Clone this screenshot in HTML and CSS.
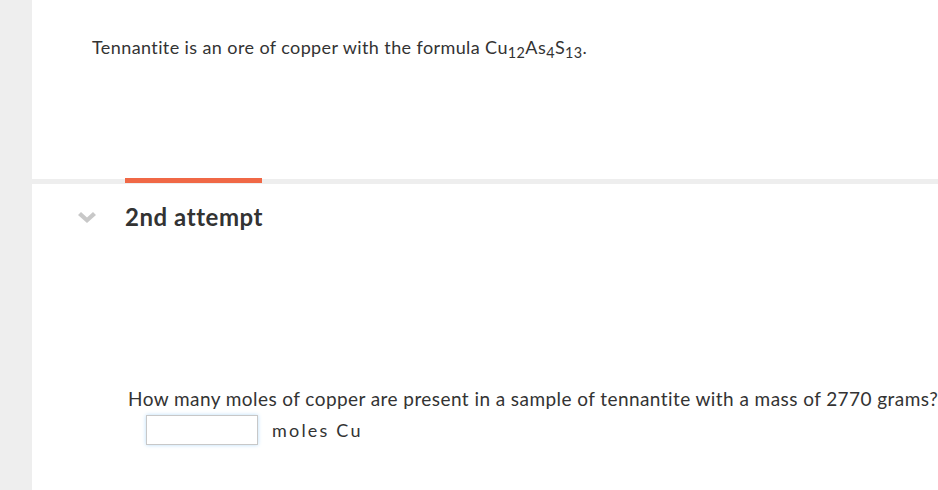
FILE: index.html
```html
<!DOCTYPE html>
<html lang="en">

<head>
    <meta charset="UTF-8">
    <meta name="viewport" content="width=device-width, initial-scale=1.0">
    <title>Tennantite</title>
    <link rel="stylesheet" href="styles.css">
</head>

<body>
    <div class="page">
        <div class="sidebar"></div>
        <div class="content">
            <!-- Problem intro -->
            <div class="intro">
                <p>Tennantite is an ore of copper with the formula Cu<sub>12</sub>As<sub>4</sub>S<sub>13</sub>.</p>
            </div>

            <!-- Attempt -->
            <div class="attempt">
                <div class="attempt-tab"></div>
                <div class="attempt-header">
                    <svg class="chevron" width="18" height="11" viewBox="0 0 18 11">
                        <polygon points="0,3 3,0 9,5.5 15,0 18,3 9,11" fill="#c8c8c8" />
                    </svg>
                    <h2>2nd attempt</h2>
                </div>
                <div class="question">
                    <p>How many moles of copper are present in a sample of tennantite with a mass of 2770 grams?</p>
                    <div class="answer">
                        <input type="text" class="answer-input">
                        <span class="unit">moles Cu</span>
                    </div>
                </div>
            </div>
        </div>
    </div>
</body>
</html>
```

FILE: styles.css
```css
body {
    margin: 0;
    font-family: Lato, "Open Sans", sans-serif;
    color: #333;
    background-color: #fff;
}

.page {
    display: flex;
    height: 490px;
    overflow: hidden;
}

.sidebar {
    width: 32px;
    flex-shrink: 0;
    background-color: #eee;
}

.content {
    flex: 1;
    min-width: 0;
}

.intro {
    height: 179px;
    padding-left: 60px;
    box-sizing: border-box;
}

.intro p {
    margin: 0;
    padding-top: 36px;
    font-size: 18px;
    letter-spacing: 0.4px;
    white-space: nowrap;
}

sub {
    font-size: 0.8em;
    vertical-align: -0.3em;
    line-height: 0;
    letter-spacing: 0.4px;
}

.attempt {
    position: relative;
    border-top: 5px solid #eee;
}

.attempt-tab {
    position: absolute;
    left: 93px;
    top: -6px;
    width: 137px;
    height: 5px;
    background-color: #f06846;
}

.attempt-header {
    display: flex;
    align-items: center;
    height: 64px;
}

.chevron {
    margin-left: 46px;
    margin-right: 29px;
    margin-top: 2px;
}

.attempt-header h2 {
    margin: 0;
    font-size: 24px;
    font-weight: bold;
    letter-spacing: 0.55px;
}

.question {
    padding-left: 96px;
    padding-top: 139px;
}

.question p {
    margin: 0;
    font-size: 19px;
    letter-spacing: 0.43px;
    white-space: nowrap;
}

.answer {
    display: flex;
    align-items: center;
    margin-top: 5px;
    padding-left: 18px;
}

.answer-input {
    width: 112px;
    height: 30px;
    box-sizing: border-box;
    border: 1px solid #c8c8c8;
    box-shadow: 0 0 4px #b8dcf8;
    outline: none;
    margin: 0 14px 0 0;
}

.unit {
    font-size: 18px;
    letter-spacing: 2.2px;
}
```
